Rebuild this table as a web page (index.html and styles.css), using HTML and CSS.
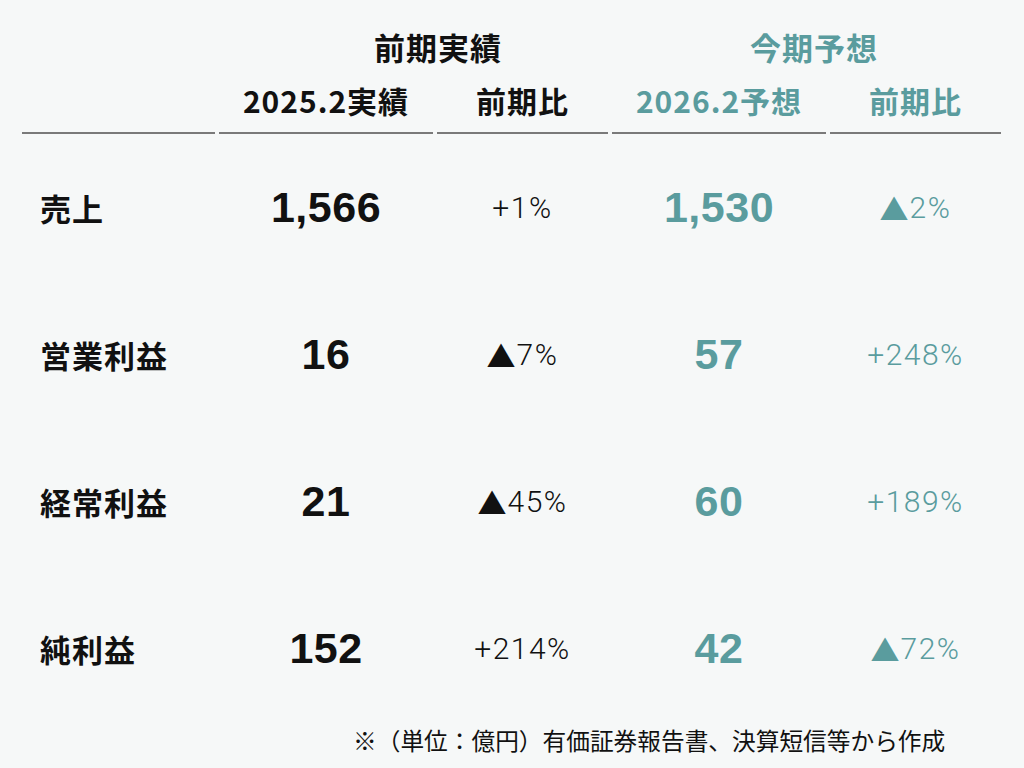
FILE: index.html
```html
<!DOCTYPE html>
<html lang="ja">
<head>
<meta charset="utf-8">
<title>業績比較</title>
<link rel="stylesheet" href="styles.css">
</head>
<body>
<main class="page">
  <div class="table">
    <div class="h1 blank"></div>
    <div class="h1 span2 past">前期実績</div>
    <div class="h1 span2 fcst">今期予想</div>

    <div class="h2"></div>
    <div class="h2">2025.2実績</div>
    <div class="h2">前期比</div>
    <div class="h2 teal">2026.2予想</div>
    <div class="h2 teal">前期比</div>

    <div class="label">売上</div>
    <div class="num">1,566</div>
    <div class="pct">+1%</div>
    <div class="num teal">1,530</div>
    <div class="pct teal"><span class="tri">▲</span>2%</div>

    <div class="label">営業利益</div>
    <div class="num">16</div>
    <div class="pct"><span class="tri">▲</span>7%</div>
    <div class="num teal">57</div>
    <div class="pct teal">+248%</div>

    <div class="label">経常利益</div>
    <div class="num">21</div>
    <div class="pct"><span class="tri">▲</span>45%</div>
    <div class="num teal">60</div>
    <div class="pct teal">+189%</div>

    <div class="label">純利益</div>
    <div class="num">152</div>
    <div class="pct">+214%</div>
    <div class="num teal">42</div>
    <div class="pct teal"><span class="tri">▲</span>72%</div>
  </div>
  <p class="note">※（単位：億円）有価証券報告書、決算短信等から作成</p>
</main>
</body>
</html>
```

FILE: styles.css
```css
html, body {
  margin: 0;
  padding: 0;
  background: #f6f8f8;
}
body {
  width: 1024px;
  height: 768px;
  overflow: hidden;
  color: #111;
  font-family: "Noto Sans CJK JP", "Noto Sans", sans-serif;
}
.page {
  padding: 20px 23px 0 22px;
}
.table {
  display: grid;
  grid-template-columns: 193px 214px 171px 214px 171px;
  column-gap: 4px;
}
.h1 {
  height: 54px;
  line-height: 54px;
  font-size: 31px;
  font-weight: 700;
  letter-spacing: 1px;
  text-align: center;
}
.span2 { grid-column: span 2; }
.past { padding-left: 49px; }
.fcst { padding-left: 15px; color: #5a9c9e; }
.h2 {
  height: 52px;
  line-height: 52px;
  padding-bottom: 6px;
  border-bottom: 2px solid #7a7a7a;
  font-size: 30px;
  font-weight: 700;
  letter-spacing: 1px;
  text-align: center;
}
.label, .num, .pct {
  height: 147px;
  display: flex;
  align-items: center;
}
.label {
  padding-left: 18px;
  font-size: 31px;
  font-weight: 700;
  letter-spacing: 1px;
}
.num {
  justify-content: center;
  font-family: "Liberation Sans", Arial, sans-serif;
  font-weight: 700;
  font-size: 43px;
  letter-spacing: 0.5px;
}
.pct {
  justify-content: center;
  font-family: Roboto, "Liberation Sans", sans-serif;
  font-weight: 300;
  font-size: 30px;
  letter-spacing: 1.5px;
}
.tri {
  font-family: "Noto Sans CJK JP", sans-serif;
  font-size: 29px;
  letter-spacing: 0;
  margin-right: 1px;
}
.teal { color: #5a9c9e; }
.note {
  margin: 0;
  height: 36px;
  line-height: 36px;
  padding-left: 331px;
  font-size: 23.7px;
  color: #111;
}
```
